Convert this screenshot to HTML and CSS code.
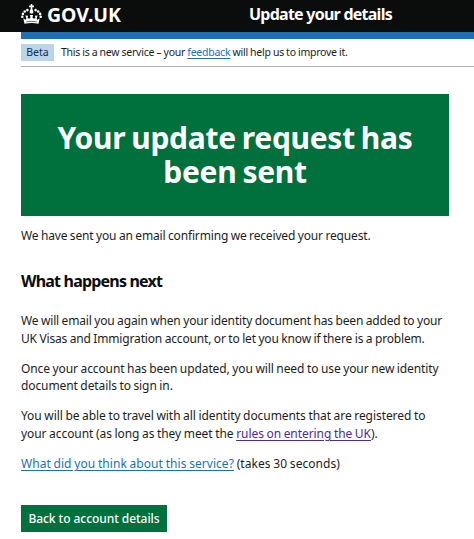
FILE: index.html
```
<!DOCTYPE html>
<html lang="en">
<head>
	<meta charset="utf-8">
	<title>Your update request has been sent - GOV.UK</title>
	<link rel="stylesheet" href="styles.css">
</head>
<body>
	<header class="header">
		<a class="logo" href="#">
			<svg class="crown" viewBox="0 0 21 21" width="21" height="21" fill="#fff" aria-hidden="true">
				<path d="M9.7 0h1.6v1.5h1.6v1.7h-1.6v1.5l1 2.600a1.900 1.900 0 1 1-3.600 0l1-2.600V3.200h-1.600V1.500h1.600z"/>
				<circle cx="6.400" cy="6.100" r="1.300"/>
				<circle cx="3.800" cy="7.500" r="1.300"/>
				<circle cx="1.900" cy="9.900" r="1.300"/>
				<circle cx="1.300" cy="12.700" r="1.300"/>
				<circle cx="14.600" cy="6.100" r="1.300"/>
				<circle cx="17.200" cy="7.500" r="1.300"/>
				<circle cx="19.100" cy="9.900" r="1.300"/>
				<circle cx="19.700" cy="12.700" r="1.300"/>
				<path d="M3.500 19.800L2.300 14.200l2.200 1.500c.8-.4 1-1.400.5-2.500l-.6-1.700 2.800.3-.6 1.600c.2 1.500 2.500 1.500 2.900-.2l-.7-2.200h3.400l-.7 2.200c.4 1.700 2.700 1.700 2.900.2l-.6-1.600 2.800-.3-.6 1.700c-.5 1.100-.3 2.100.5 2.500l2.200-1.500-1.200 5.600c-4.600-1-9.400-1-14 0z"/>
				<path d="M5.200 17.900c3.500-.7 7.100-.7 10.600 0" fill="none" stroke="#0b0c0c" stroke-width=".6"/>
			</svg>
			<span class="logo-text">GOV.UK</span>
		</a>
		<a class="service-name" href="#">Update your details</a>
	</header>

	<div class="container">
		<div class="blue-bar"></div>
		<div class="phase-banner">
			<strong class="tag">Beta</strong>
			<span class="phase-text">This is a new service – your <a class="link" href="#">feedback</a> will help us to improve it.</span>
		</div>
	</div>

	<main class="main">
		<div class="panel">
			<h1 class="panel-title">Your update request has<br>been sent</h1>
		</div>
		<p class="body-text sent">We have sent you an email confirming we received your request.</p>
		<h2 class="heading">What happens next</h2>
		<p class="body-text">We will email you again when your identity document has been added to your<br>UK Visas and Immigration account, or to let you know if there is a problem.</p>
		<p class="body-text account">Once your account has been updated, you will need to use your new identity<br>document details to sign in.</p>
		<p class="body-text travel">You will be able to travel with all identity documents that are registered to<br>your account (as long as they meet the <a class="link visited" href="#">rules on entering the UK</a>).</p>
		<p class="body-text survey"><a class="link" href="#">What did you think about this service?</a> (takes 30 seconds)</p>
		<a class="button" href="#">Back to account details</a>
	</main>
</body>
</html>
```
FILE: styles.css
```
body {
	margin: 0;
	background-color: #fff;
	color: #1c1d1d;
	font-family: "Noto Sans", "Open Sans", sans-serif;
	overflow: hidden;
}

.header {
	display: flex;
	align-items: center;
	height: 32px;
	padding-left: 21px;
	background-color: #0b0c0c;
}

.header a {
	color: #fff;
	text-decoration: none;
	font-weight: bold;
	white-space: nowrap;
}

.logo {
	display: flex;
	align-items: center;
	width: 228px;
	height: 26px;
	margin-bottom: 3px;
}

.crown {
	margin-right: 5px;
}

.logo-text {
	font-size: 19.5px;
	line-height: 26px;
}

.service-name {
	font-size: 16px;
	line-height: 26px;
	letter-spacing: -0.75px;
	margin-bottom: 4px;
}

.container {
	margin-left: 21px;
}

.blue-bar {
	height: 7px;
	background-color: #1d70b8;
}

.phase-banner {
	display: flex;
	align-items: center;
	height: 27px;
	border-bottom: 1px solid #b1b4b6;
	font-size: 10.5px;
}

.tag {
	width: 33px;
	height: 17px;
	margin-right: 7px;
	background-color: #bbd4ea;
	color: #0c2d4a;
	font-weight: normal;
	line-height: 17px;
	text-align: center;
}

.phase-text {
	letter-spacing: -0.24px;
	word-spacing: -0.3px;
	white-space: nowrap;
	margin-top: -1px;
}

.main {
	margin: 27px 25px 0 21px;
}

.panel {
	box-sizing: border-box;
	height: 122px;
	padding-top: 27px;
	background-color: #00703c;
	color: #fff;
	text-align: center;
}

.panel-title {
	margin: 0;
	font-size: 30px;
	line-height: 34px;
	letter-spacing: -0.3px;
	word-spacing: -1.5px;
	white-space: nowrap;
}

.body-text {
	margin: 0 0 13px;
	font-size: 12px;
	line-height: 17.3px;
	letter-spacing: -0.16px;
	word-spacing: -0.4px;
	white-space: nowrap;
}

.sent {
	margin-top: 11px;
	margin-bottom: 26px;
}

.account {
	letter-spacing: -0.1px;
}

.travel {
	letter-spacing: -0.07px;
}

.survey {
	letter-spacing: 0.04px;
}

.heading {
	margin: 0 0 20px;
	color: #0b0c0c;
	font-size: 16px;
	line-height: 22px;
	letter-spacing: -0.8px;
}

.link {
	color: #1d70b8;
	text-decoration: underline;
	text-decoration-thickness: 1px;
	text-underline-offset: 2px;
}

.visited {
	color: #4c2c92;
}

.button {
	display: inline-block;
	width: 146px;
	height: 27px;
	margin-top: 20px;
	background-color: #00703c;
	color: #fff;
	font-size: 12px;
	font-weight: 500;
	letter-spacing: -0.05px;
	line-height: 27px;
	text-align: center;
	text-decoration: none;
	white-space: nowrap;
}
```
